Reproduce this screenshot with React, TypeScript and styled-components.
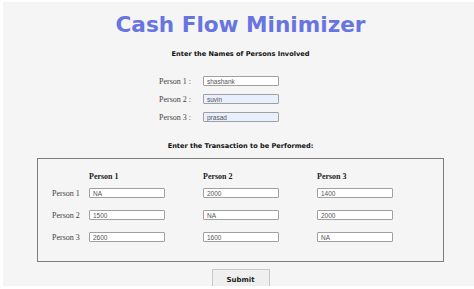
import React from 'react'
import styled, { createGlobalStyle } from 'styled-components'

const GlobalStyle = createGlobalStyle`
    html, body {
        margin: 0;
        padding: 0;
        background: #ffffff;
        overflow: hidden;
    }
`

const Page = styled.div`
    margin: 2px 0 0 3px;
    height: 284px;
    padding: 8px 0 0 4px;
    box-sizing: border-box;
    background: #f5f5f5;
    display: flex;
    flex-direction: column;
    align-items: center;
    overflow: hidden;
`

const Title = styled.h1`
    margin: 0;
    font-family: "DejaVu Sans", Verdana, sans-serif;
    font-weight: bold;
    font-size: 21.6px;
    line-height: 30px;
    color: #6874e0;
`

const Heading = styled.h3<{ $gap: number }>`
    margin: ${p => p.$gap}px 0 0;
    font-family: "DejaVu Sans", Verdana, sans-serif;
    font-weight: bold;
    font-size: 6.6px;
    line-height: 12px;
    color: #111;
`

const NameGrid = styled.div`
    align-self: flex-start;
    margin: 12px 0 0 152px;
    display: grid;
    grid-template-columns: 44px 76px;
    grid-auto-rows: 18px;
    align-items: center;
`

const Label = styled.span`
    font-family: "Liberation Serif", "Times New Roman", serif;
    font-size: 8px;
    color: #444;
`

const Field = styled.input<{ $filled?: boolean }>`
    box-sizing: border-box;
    width: 76px;
    height: 10px;
    margin: 0;
    padding: 0 3px;
    border: 1px solid #a0a0a0;
    border-radius: 1px;
    background: ${p => (p.$filled ? '#e8f0fe' : '#ffffff')};
    font-family: "Liberation Sans", Arial, sans-serif;
    font-size: 6.5px;
    color: #555;
    outline: none;
`

const TransBox = styled.div`
    margin-top: 6px;
    width: 407px;
    box-sizing: border-box;
    border: 1px solid #7d7d7d;
    padding: 11px 14px 13px;
    display: grid;
    grid-template-columns: 37px 114px 114px 1fr;
    grid-template-rows: 12px repeat(3, 22px);
    align-items: center;
`

const ColHead = styled.span`
    font-family: "Liberation Serif", "Times New Roman", serif;
    font-weight: bold;
    font-size: 8px;
    color: #222;
`

const SubmitButton = styled.button`
    margin-top: 7px;
    width: 58px;
    height: 24px;
    flex-shrink: 0;
    border: 1px solid #c8c8c8;
    background: #efefef;
    font-family: "DejaVu Sans", Verdana, sans-serif;
    font-weight: bold;
    font-size: 7px;
    color: #222;
    padding: 0 0 2px;
`

const names = ['shashank', 'suvin', 'prasad']

const amounts = [
    ['NA', '2000', '1400'],
    ['1500', 'NA', '2000'],
    ['2600', '1600', 'NA'],
]

function App() {
    return (
        <>
            <GlobalStyle />
            <Page>
                <Title>Cash Flow Minimizer</Title>

                <Heading $gap={8}>Enter the Names of Persons Involved</Heading>

                <NameGrid>
                    {names.map((name, i) => (
                        <React.Fragment key={i}>
                            <Label>Person {i + 1} :</Label>
                            <Field defaultValue={name} $filled={i > 0} />
                        </React.Fragment>
                    ))}
                </NameGrid>

                <Heading $gap={14}>Enter the Transaction to be Performed:</Heading>

                <TransBox>
                    <span />
                    {names.map((_, i) => (
                        <ColHead key={i}>Person {i + 1}</ColHead>
                    ))}
                    {amounts.map((row, r) => (
                        <React.Fragment key={r}>
                            <Label>Person {r + 1}</Label>
                            {row.map((val, c) => (
                                <Field key={c} defaultValue={val} />
                            ))}
                        </React.Fragment>
                    ))}
                </TransBox>

                <SubmitButton>Submit</SubmitButton>
            </Page>
        </>
    )
}

export default App
